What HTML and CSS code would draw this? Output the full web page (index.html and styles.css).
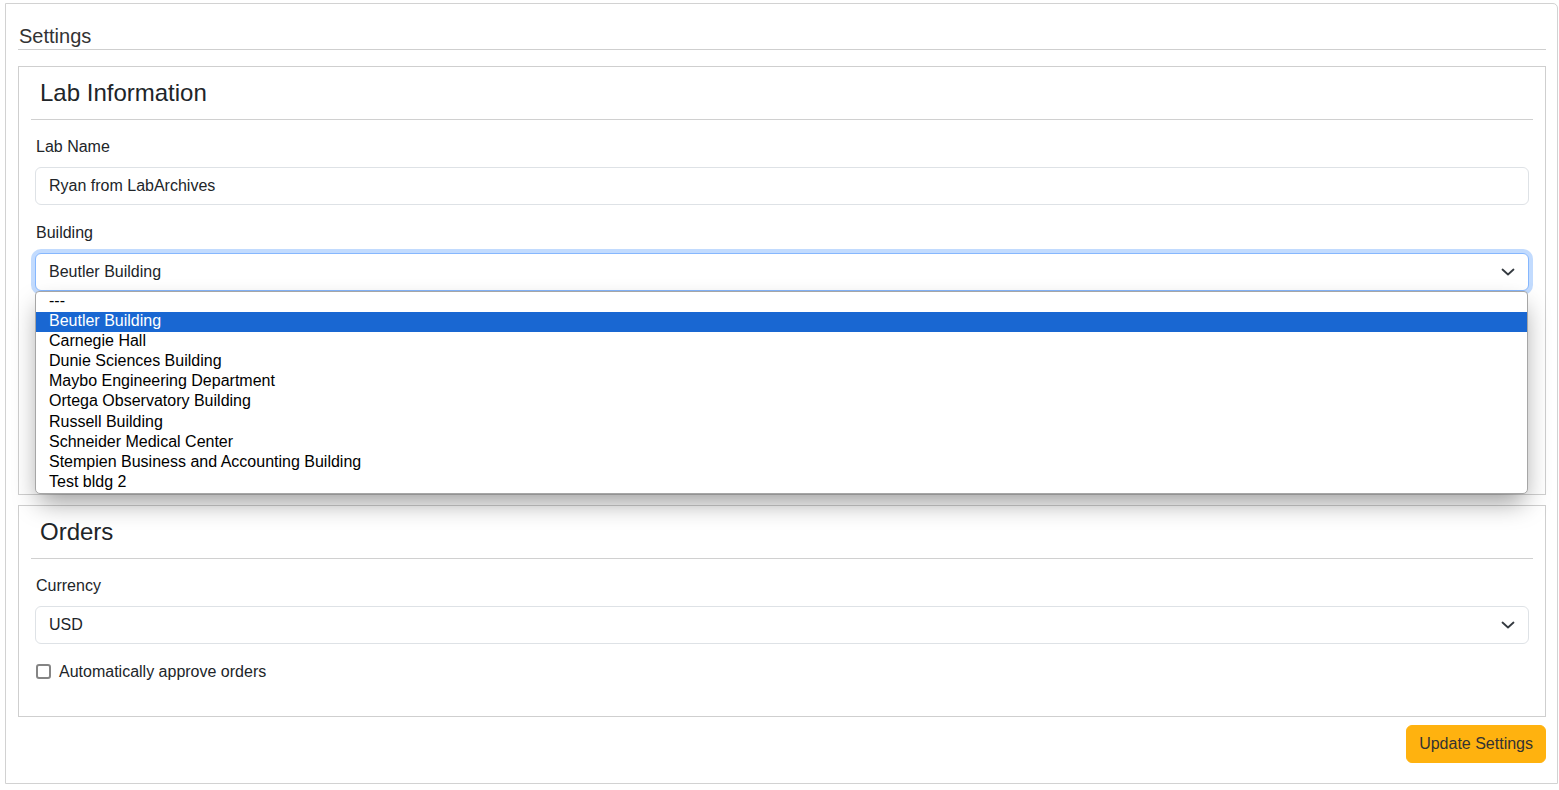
FILE: index.html
```html
<!DOCTYPE html>
<html lang="en">
<head>
<meta charset="utf-8">
<title>Settings</title>
<link rel="stylesheet" href="styles.css">
</head>
<body>
<div class="panel">
  <h2 class="page-title">Settings</h2>

  <section class="card">
    <h3 class="card-title">Lab Information</h3>
    <hr class="rule">
    <div class="group">
      <label class="label">Lab Name</label>
      <div class="control">Ryan from LabArchives</div>
    </div>
    <div class="group group-select">
      <label class="label">Building</label>
      <div class="control select focus">
        <span class="value">Beutler Building</span>
        <svg class="chev" width="16" height="8" viewBox="0 0 16 8"><polyline points="2.5,1.5 8,6.5 13.5,1.5" fill="none" stroke="#343a40" stroke-width="1.8" stroke-linecap="round" stroke-linejoin="round"/></svg>
      </div>
      <ul class="dropdown">
        <li class="opt">---</li>
        <li class="opt selected">Beutler Building</li>
        <li class="opt">Carnegie Hall</li>
        <li class="opt">Dunie Sciences Building</li>
        <li class="opt">Maybo Engineering Department</li>
        <li class="opt">Ortega Observatory Building</li>
        <li class="opt">Russell Building</li>
        <li class="opt">Schneider Medical Center</li>
        <li class="opt">Stempien Business and Accounting Building</li>
        <li class="opt">Test bldg 2</li>
      </ul>
    </div>
    <div class="covered-fields"></div>
  </section>

  <section class="card card-orders">
    <h3 class="card-title">Orders</h3>
    <hr class="rule">
    <div class="group">
      <label class="label">Currency</label>
      <div class="control select">
        <span class="value">USD</span>
        <svg class="chev" width="16" height="8" viewBox="0 0 16 8"><polyline points="2.5,1.5 8,6.5 13.5,1.5" fill="none" stroke="#343a40" stroke-width="1.8" stroke-linecap="round" stroke-linejoin="round"/></svg>
      </div>
    </div>
    <div class="group check-row">
      <span class="checkbox"></span>
      <span class="check-label">Automatically approve orders</span>
    </div>
  </section>

  <div class="actions">
    <button class="btn" type="button">Update Settings</button>
  </div>
</div>
</body>
</html>
```
FILE: styles.css
```css
* { box-sizing: border-box; }
html, body { margin: 0; padding: 0; background: #fff; }
body {
  font-family: "Liberation Sans", Arial, sans-serif;
  font-size: 16px;
  color: #212529;
}
.panel {
  margin: 3px 1px 0 5px;
  border: 1px solid #d2d2d2;
  border-radius: 0 5px 0 0;
  padding: 20px 11px 20px 12px;
  background: #fff;
}
.page-title {
  margin: 0 0 16px;
  font-size: 20px;
  font-weight: normal;
  line-height: 24px;
  color: #333;
  text-indent: 1px;
  padding-bottom: 1px;
  border-bottom: 1px solid #cfcfcf;
}
.card {
  border: 1px solid #cfcfcf;
  padding: 11px 12px 15px;
  background: #fff;
}
.card-orders { margin-top: 10px; }
.card-title {
  margin: 0 0 11px;
  padding: 1px 0 0 9px;
  font-size: 24px;
  font-weight: normal;
  line-height: 28.8px;
  color: #212529;
}
.rule {
  margin: 0 0 15px;
  border: 0;
  border-top: 1px solid #d0d0d0;
  height: 0;
}
.group {
  padding: 0 4px;
  margin-bottom: 16px;
}
.group-select { position: relative; }
.covered-fields { height: 172px; }
.label {
  display: block;
  line-height: 24px;
  margin-bottom: 8px;
  padding-left: 1px;
}
.control {
  height: 38px;
  border: 1px solid #dee2e6;
  border-radius: 6px;
  padding: 6px 12px 6px 13px;
  line-height: 24px;
  background: #fff;
}
.select {
  display: flex;
  align-items: center;
  justify-content: space-between;
}
.focus {
  border-color: #86b7fe;
  box-shadow: 0 0 0 4px rgba(13, 110, 253, 0.25);
}
.chev { display: block; flex: none; }
.dropdown {
  position: absolute;
  z-index: 5;
  top: 70.2px;
  left: 4px;
  right: 5px;
  margin: 0;
  padding: 0 0 0.5px;
  list-style: none;
  background: #fff;
  border: 1px solid #a6a6a6;
  border-radius: 4px 4px 5px 5px;
  box-shadow: 0 12px 26px -4px rgba(0, 0, 0, 0.4);
  color: #000;
}
.opt {
  height: 20.1px;
  line-height: 18px;
  padding: 0 0 2px 13px;
  white-space: nowrap;
}
.opt.selected {
  background: #1967d2;
  color: #fff;
}
.check-row {
  display: flex;
  align-items: center;
  line-height: 24px;
  margin-bottom: 17px;
}
.checkbox {
  display: block;
  width: 15px;
  height: 15px;
  border: 2px solid #858585;
  border-radius: 3px;
  margin-left: 1px;
  margin-right: 8px;
  background: #fff;
}
.actions {
  display: flex;
  justify-content: flex-end;
  margin-top: 8px;
}
.btn {
  font-family: "Liberation Sans", Arial, sans-serif;
  font-size: 16px;
  line-height: 24px;
  padding: 6px 12px;
  border: 1px solid #ffb20f;
  border-radius: 6px;
  background: #ffb20f;
  color: #333;
  cursor: pointer;
}
```
